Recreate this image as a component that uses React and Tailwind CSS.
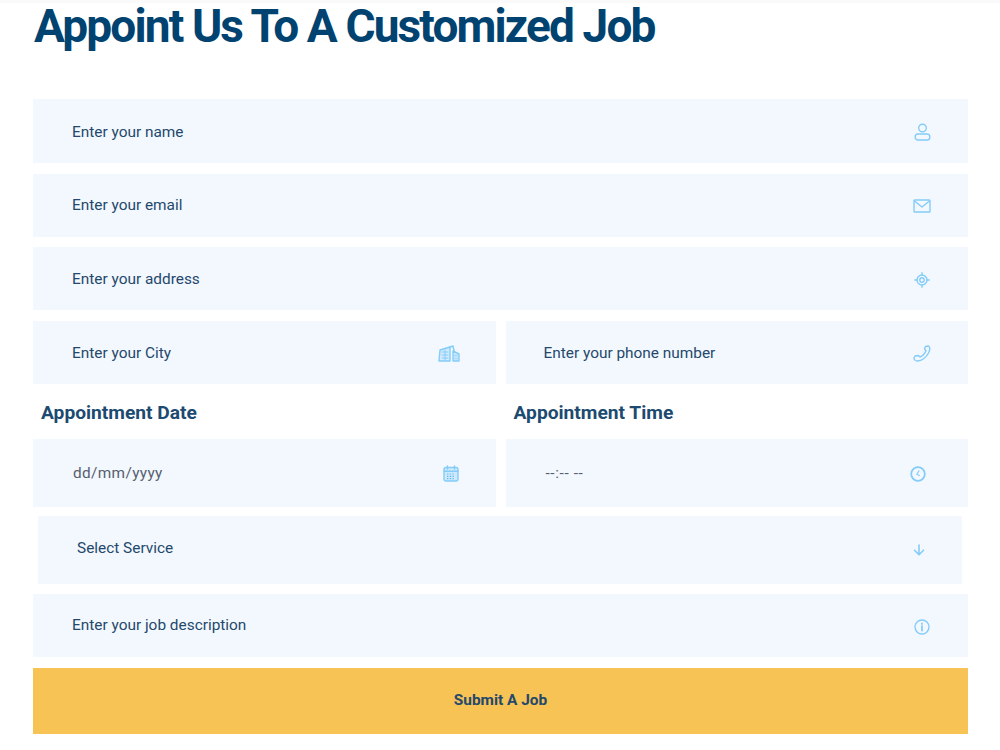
import React from "react";

const S = ({ w, h, children, className = "" }) => (
  <svg width={w} height={h} viewBox={`0 0 ${w} ${h}`} fill="none" stroke="#84ccf8" strokeWidth="1.4" strokeLinecap="round" strokeLinejoin="round" className={`shrink-0 ${className}`}>
    {children}
  </svg>
);

const UserIcon = () => (
  <S w={17} h={18} className="mt-[2px]">
    <circle cx="8.5" cy="5" r="3.8" />
    <rect x="1.2" y="11" width="14.6" height="6" rx="2.8" />
  </S>
);
const MailIcon = () => (
  <S w={18} h={14} className="mt-[1px]">
    <rect x="1" y="1" width="16" height="12" rx="0.8" />
    <path d="M1.5 2 L9 8 L16.5 2" />
  </S>
);
const TargetIcon = () => (
  <S w={16} h={16} className="mt-[3px]">
    <circle cx="8" cy="8" r="5" />
    <circle cx="8" cy="8" r="2.2" />
    <path d="M8 0.8V3M8 13v2.2M0.8 8H3M13 8h2.2" />
  </S>
);
const BuildingIcon = () => (
  <S w={22} h={17} className="mt-[2px]">
    <path d="M1 16 L2 5 L12 2 V16 Z" fill="#d3ebfc" />
    <path d="M12 2 L15 1 L16 6" />
    <path d="M15 6 L21 9 V16 H15 Z" fill="#d3ebfc" />
    <path d="M4 7h6M4 10h6M4 13h6M7 5v10M17 10v1M19 10v1M17 13v1M19 13v1" strokeWidth="1" />
  </S>
);
const PhoneIcon = () => (
  <S w={18} h={17} className="mt-[2px]">
    <path d="M12.5 1.5 L15.5 1 C17 2 17 5 15.5 8 C13.5 12 9 16 4.5 16 C2.5 16 1 14.5 1 13 L2 11 L5.5 10.5 L7 12 C9.5 11 12 8.5 13 5.5 L11.5 4 Z" />
  </S>
);
const CalendarIcon = () => (
  <S w={16} h={17}>
    <rect x="1" y="2.5" width="14" height="13.5" rx="2" fill="#cfe8fb" />
    <path d="M4.5 1v3M11.5 1v3M1 6.2h14" />
    <path d="M4 9h8M4 11.3h8M4 13.6h8" strokeWidth="1.2" strokeDasharray="1.4 1.3" strokeLinecap="butt" stroke="#5fbdf5" />
  </S>
);
const ClockIcon = () => (
  <S w={16} h={16} className="mt-[1px]">
    <circle cx="8" cy="8" r="6.8" strokeWidth="1.8" />
    <path d="M9 4.8 L6.8 8.3 L9.3 9.5" strokeWidth="1.2" />
  </S>
);
const ArrowIcon = () => (
  <S w={12} h={12}>
    <path d="M6 1v9.5M1.5 6.2 L6 10.8 L10.5 6.2" strokeWidth="1.6" />
  </S>
);
const InfoIcon = () => (
  <S w={16} h={16} className="mt-[3px]">
    <circle cx="8" cy="8" r="7" />
    <path d="M8 7.2v4.3" strokeWidth="1.8" />
    <path d="M8 4.4v0.6" strokeWidth="1.8" />
  </S>
);

const Field = ({ text, icon, className = "", textClass = "text-[#24486b]" }) => (
  <div className={`flex items-center justify-between bg-[#f3f8ff] ${className}`}>
    <span className={`text-[15.4px] ${textClass}`}>{text}</span>
    {icon}
  </div>
);

export default function App() {
  return (
    <div className="w-[1000px] h-[750px] overflow-hidden bg-white font-['Roboto',sans-serif]">
      <div className="h-[3px] bg-[#fafafa]" />
      <div className="pl-[33px] pr-[32px]">
        <h1 className="pl-px text-[46px] leading-[46px] font-bold tracking-[-1.87px] text-[#004370]">Appoint Us To A Customized Job</h1>
        <div className="mt-[50px] flex flex-col">
          <Field text="Enter your name" icon={<UserIcon />} className="h-[64px] pl-[39px] pr-[37px]" textClass="text-[#24486b] pt-[4px]" />
          <Field text="Enter your email" icon={<MailIcon />} className="mt-[11px] h-[63px] pl-[39px] pr-[37px]" />
          <Field text="Enter your address" icon={<TargetIcon />} className="mt-[10px] h-[63px] pl-[39px] pr-[38px]" textClass="text-[#24486b] pt-[3px]" />
          <div className="mt-[11px] grid grid-cols-2 gap-[10px]">
            <Field text="Enter your City" icon={<BuildingIcon />} className="h-[63px] pl-[39px] pr-[36px]" textClass="text-[#24486b] pt-[3px]" />
            <Field text="Enter your phone number" icon={<PhoneIcon />} className="h-[63px] pl-[38px] pr-[37px]" textClass="text-[#24486b] pt-[3px]" />
          </div>
          <div className="mt-[19px] grid grid-cols-2 gap-[10px]">
            <div className="pl-[8px] text-[19.2px] leading-[20px] font-bold text-[#1c4a70]">Appointment Date</div>
            <div className="pl-[8px] text-[19.2px] leading-[20px] font-bold text-[#1c4a70]">Appointment Time</div>
          </div>
          <div className="mt-[16px] grid grid-cols-2 gap-[10px]">
            <Field text="dd/mm/yyyy" icon={<CalendarIcon />} className="h-[68px] pl-[40px] pr-[37px]" textClass="text-[#56606e] tracking-[0.35px] pt-[1px]" />
            <Field text="--:-- --" icon={<ClockIcon />} className="h-[68px] pl-[40px] pr-[42px]" textClass="text-[#56606e] tracking-[0.6px] pt-[1px]" />
          </div>
          <Field text="Select Service" icon={<ArrowIcon />} className="ml-[5px] mr-[6px] mt-[9px] h-[68px] pl-[39px] pr-[37px]" textClass="text-[#24486b] pb-[3px]" />
          <Field text="Enter your job description" icon={<InfoIcon />} className="mt-[10px] h-[63px] pl-[39px] pr-[38px]" />
          <button className="mt-[11px] h-[66px] bg-[#f7c355] text-[15.4px] font-bold text-[#24486b]">Submit A Job</button>
        </div>
      </div>
    </div>
  );
}
